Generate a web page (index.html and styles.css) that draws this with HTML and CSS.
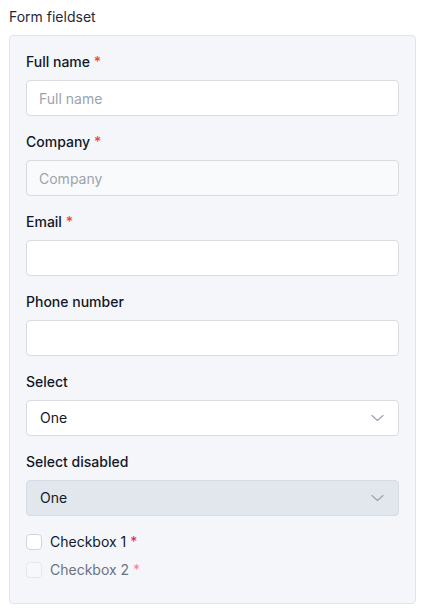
FILE: index.html
```html
<!DOCTYPE html>
<html>
<head>
<meta charset="utf-8">
<link rel="stylesheet" href="styles.css">
</head>
<body>
<div class="page">
  <div class="title">Form fieldset</div>
  <div class="fieldset">
    <div class="field">
      <label class="label">Full name <span class="req">*</span></label>
      <input class="input" type="text" placeholder="Full name">
    </div>
    <div class="field">
      <label class="label">Company <span class="req">*</span></label>
      <input class="input input-muted" type="text" placeholder="Company">
    </div>
    <div class="field">
      <label class="label">Email <span class="req">*</span></label>
      <input class="input" type="text">
    </div>
    <div class="field">
      <label class="label">Phone number</label>
      <input class="input" type="text">
    </div>
    <div class="field">
      <label class="label">Select</label>
      <div class="select">
        <span>One</span>
        <svg class="chev" width="13" height="12" viewBox="0 0 13 12"><path d="M1 3.5 L6.5 8.5 L12 3.5" fill="none" stroke="#9ca3af" stroke-width="1.2" stroke-linecap="round" stroke-linejoin="round"/></svg>
      </div>
    </div>
    <div class="field">
      <label class="label">Select disabled</label>
      <div class="select select-disabled">
        <span>One</span>
        <svg class="chev" width="13" height="12" viewBox="0 0 13 12"><path d="M1 3.5 L6.5 8.5 L12 3.5" fill="none" stroke="#9ca3af" stroke-width="1.2" stroke-linecap="round" stroke-linejoin="round"/></svg>
      </div>
    </div>
    <div class="checks">
      <div class="check">
        <span class="box"></span>
        <span class="check-label">Checkbox 1 <span class="req req-check">*</span></span>
      </div>
      <div class="check check-disabled">
        <span class="box"></span>
        <span class="check-label">Checkbox 2 <span class="req req-check">*</span></span>
      </div>
    </div>
  </div>
</div>
</body>
</html>
```

FILE: styles.css
```css
* { box-sizing: border-box; }
html, body { margin: 0; padding: 0; background: #ffffff; }
body {
  font-family: Inter, "Noto Sans", sans-serif;
  font-size: 14px;
  line-height: 20px;
  color: #111827;
}
.page { padding: 7px 8px 0 9px; }
.title {
  font-size: 14px;
  line-height: 20px;
  color: #1f2937;
  margin-bottom: 8px;
}
.fieldset {
  background: #f5f6fa;
  border: 1px solid #e2e4ea;
  border-radius: 4px;
  padding: 16px 16px 23px 16px;
  display: flex;
  flex-direction: column;
  gap: 16px;
}
.field { display: flex; flex-direction: column; gap: 8px; }
.label {
  font-weight: 500;
  font-size: 14px;
  line-height: 20px;
  color: #111827;
}
.req { color: #ef4444; }
.input {
  display: block;
  width: 100%;
  height: 36px;
  border: 1px solid #d9dbe1;
  border-radius: 4px;
  background: #ffffff;
  padding: 0 12px;
  font-family: inherit;
  font-size: 14px;
  color: #111827;
  outline: none;
}
.input::placeholder { color: #9ca3af; }
.input-muted { background: #f9fafb; }
.select {
  height: 36px;
  border: 1px solid #d9dbe1;
  border-radius: 4px;
  background: #ffffff;
  padding: 0 14px 0 13px;
  display: flex;
  align-items: center;
  justify-content: space-between;
  font-size: 14px;
  color: #111827;
}
.select-disabled { background: #e2e7ee; border-color: #d6dbe3; }
.chev { display: block; }
.checks { display: flex; flex-direction: column; gap: 8px; }
.check { display: flex; align-items: center; gap: 8px; height: 20px; }
.box {
  width: 16px; height: 16px;
  border: 1px solid #d1d5db;
  border-radius: 4px;
  background: #ffffff;
  flex: none;
}
.check-label { font-size: 14px; color: #111827; }
.req-check { color: #e11d48; }
.check-disabled .box { background: #f7f8fa; border-color: #e5e7eb; }
.check-disabled .check-label { color: #6b7280; }
.check-disabled .req-check { color: #f2849a; }
```
